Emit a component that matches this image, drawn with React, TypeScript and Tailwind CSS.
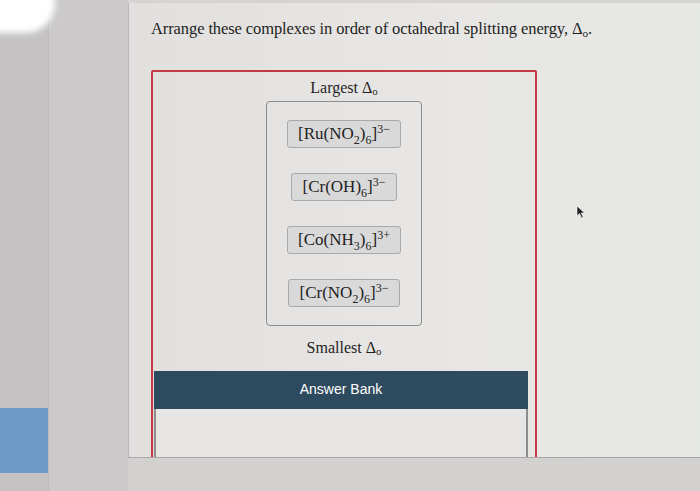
import React from 'react';

const serif = { fontFamily: '"Liberation Serif", "Times New Roman", serif' };

function Delta() {
  return (
    <span>
      Δ<span className="text-[0.68em] relative top-[0.25em]">o</span>
    </span>
  );
}

type Complex = { metal: string; ligand: string; lsub?: string; charge: string };

const complexes: Complex[] = [
  { metal: 'Ru', ligand: 'NO', lsub: '2', charge: '3−' },
  { metal: 'Cr', ligand: 'OH', charge: '3−' },
  { metal: 'Co', ligand: 'NH', lsub: '3', charge: '3+' },
  { metal: 'Cr', ligand: 'NO', lsub: '2', charge: '3−' },
];

function Sub({ children }: { children: React.ReactNode }) {
  return <span className="text-[12px] relative top-[5px]">{children}</span>;
}

function Chip({ c }: { c: Complex }) {
  return (
    <div className="h-[28px] px-[10px] flex items-center bg-[#d9d9d9] border border-[#a9a9a9] rounded-[3px] text-[17px] text-[#222] leading-none whitespace-nowrap">
      <span>
        [{c.metal}({c.ligand}
        {c.lsub && <Sub>{c.lsub}</Sub>})<Sub>6</Sub>]
        <span className="text-[12px] relative -top-[6px]">{c.charge}</span>
      </span>
    </div>
  );
}

export default function App() {
  return (
    <div className="w-[700px] h-[491px] flex overflow-hidden bg-[#cfcdcc] relative" style={serif}>
      {/* left side of the screen */}
      <div className="w-[48px] shrink-0 h-full bg-[#c4c2c3] flex flex-col">
        <div className="h-[408px]" />
        <div className="h-[65px] bg-[#6d9bc8]" />
      </div>
      <div className="w-[80px] shrink-0 h-full bg-[#cbc9c9] border-l border-[#bdbbbb]" />

      {/* question panel */}
      <div className="flex-1 min-w-0 flex flex-col">
        <div className="h-[3px] bg-[#d6d4d3]" />
        <div className="h-[454px] bg-gradient-to-r from-[#e2e0de] via-[#e8e6e4] to-[#e6e8e5] border-l border-[#b9b7b7] overflow-hidden pl-[22px] pr-[163px]">
          <p className="pt-[14px] text-[16.5px] text-[#1e1e1e] tracking-[-0.1px] whitespace-nowrap">
            Arrange these complexes in order of octahedral splitting energy, <Delta />.
          </p>

          <div className="mt-[28px] h-[420px] border-2 border-[#c43a44] rounded-[2px] flex flex-col items-center">
            <div className="mt-[4px] text-[16px] text-[#1e1e1e]">
              Largest <Delta />
            </div>
            <div className="mt-[1px] w-[156px] h-[225px] border-[1.5px] border-[#8c8c8c] rounded-[4px] flex flex-col items-center pt-[18px] gap-[25px]">
              {complexes.map((c, i) => (
                <Chip key={i} c={c} />
              ))}
            </div>
            <div className="mt-[10px] text-[16px] text-[#1e1e1e]">
              Smallest <Delta />
            </div>

            {/* answer bank */}
            <div className="mt-[11px] self-stretch ml-[1px] mr-[7px] flex flex-col">
              <div
                className="h-[38px] bg-[#2e4a5f] text-white text-[14px] flex items-center justify-center"
                style={{ fontFamily: '"Liberation Sans", Arial, sans-serif' }}
              >
                Answer Bank
              </div>
              <div className="h-[60px] border-x-2 border-[#8c8c8c] bg-[#e7e6e4]" />
            </div>
          </div>
        </div>
        <div className="flex-1 bg-[#d3d1d0] border-t border-[#a9a7a7]" />
      </div>

      {/* glare on the glass */}
      <div className="absolute -left-[30px] -top-[25px] w-[85px] h-[58px] rounded-full bg-white blur-[3px]" />

      {/* mouse pointer */}
      <svg className="absolute left-[576px] top-[205px]" width="10" height="14" viewBox="0 0 10 14">
        <path d="M1 1 L1 11 L3.5 8.6 L5.6 13 L7.2 12.3 L5.2 8 L8.6 8 Z" fill="#222" stroke="#fff" strokeWidth="0.6" />
      </svg>
    </div>
  );
}
